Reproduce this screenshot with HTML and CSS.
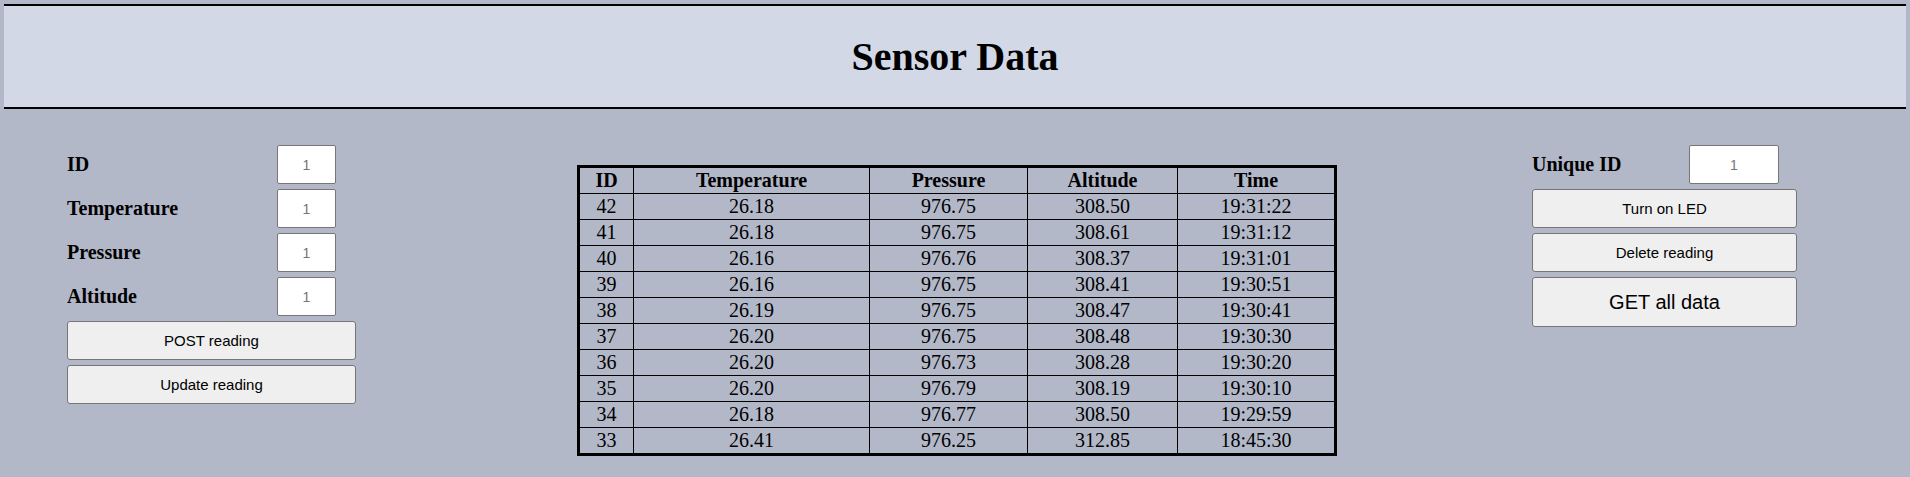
FILE: index.html
```html
<!DOCTYPE html>
<html lang="en">
<head>
	<meta charset="utf-8">
	<title>Sensor Data</title>
	<meta name="viewport" content="width=device-width, initial-scale=1">
	<link rel="stylesheet" href="styles.css">
</head>
<body>
	<div class="header">
		<h1>Sensor Data</h1>
	</div>
	<div class="main">
		<div class="panel panel_left">
			<div class="field">
				<label for="id">ID</label>
				<input type="text" id="id" placeholder="1" />
			</div>
			<div class="field">
				<label for="temperature">Temperature</label>
				<input type="text" id="temperature" placeholder="1" />
			</div>
			<div class="field">
				<label for="pressure">Pressure</label>
				<input type="text" id="pressure" placeholder="1" />
			</div>
			<div class="field">
				<label for="altitude">Altitude</label>
				<input type="text" id="altitude" placeholder="1" />
			</div>
			<button>POST reading</button>
			<button>Update reading</button>
		</div>
		<table class="readings">
			<colgroup>
				<col class="c_id">
				<col class="c_temp">
				<col class="c_pres">
				<col class="c_alt">
				<col class="c_time">
			</colgroup>
			<tr><th>ID</th><th>Temperature</th><th>Pressure</th><th>Altitude</th><th>Time</th></tr>
			<tr><td>42</td><td>26.18</td><td>976.75</td><td>308.50</td><td>19:31:22</td></tr>
			<tr><td>41</td><td>26.18</td><td>976.75</td><td>308.61</td><td>19:31:12</td></tr>
			<tr><td>40</td><td>26.16</td><td>976.76</td><td>308.37</td><td>19:31:01</td></tr>
			<tr><td>39</td><td>26.16</td><td>976.75</td><td>308.41</td><td>19:30:51</td></tr>
			<tr><td>38</td><td>26.19</td><td>976.75</td><td>308.47</td><td>19:30:41</td></tr>
			<tr><td>37</td><td>26.20</td><td>976.75</td><td>308.48</td><td>19:30:30</td></tr>
			<tr><td>36</td><td>26.20</td><td>976.73</td><td>308.28</td><td>19:30:20</td></tr>
			<tr><td>35</td><td>26.20</td><td>976.79</td><td>308.19</td><td>19:30:10</td></tr>
			<tr><td>34</td><td>26.18</td><td>976.77</td><td>308.50</td><td>19:29:59</td></tr>
			<tr><td>33</td><td>26.41</td><td>976.25</td><td>312.85</td><td>18:45:30</td></tr>
		</table>
		<div class="panel panel_right">
			<div class="field">
				<label for="unique_id">Unique ID</label>
				<input type="text" id="unique_id" placeholder="1" />
			</div>
			<button>Turn on LED</button>
			<button>Delete reading</button>
			<button class="big">GET all data</button>
		</div>
	</div>
</body>
</html>
```

FILE: styles.css
```css
body {
	margin: 4px;
	background: #b3b8c8;
	font-family: "Liberation Serif", serif;
	color: #000;
}
.header {
	background: #d2d8e6;
	border-top: 2px solid #000;
	border-bottom: 2px solid #000;
}
.header h1 {
	margin: 0;
	padding: 27px 0;
	font-size: 40px;
	text-align: center;
}
.main {
	display: flex;
	align-items: flex-start;
	padding: 36px 0 0 63px;
}
.panel {
	display: flex;
	flex-direction: column;
	gap: 5px;
}
.panel_left {
	width: 289px;
}
.panel_right {
	width: 265px;
}
.field {
	display: flex;
	align-items: center;
}
.field label {
	font-weight: bold;
	font-size: 20px;
}
.panel_left .field label {
	width: 210px;
}
.panel_right .field label {
	width: 157px;
}
.field input {
	box-sizing: border-box;
	height: 39px;
	width: 59px;
	border: 1px solid #767676;
	border-radius: 2px;
	background: #fff;
	font-family: "Liberation Sans", sans-serif;
	font-size: 14px;
	text-align: center;
}
.panel_right .field input {
	width: 90px;
}
.field input::placeholder {
	color: #757575;
}
button {
	box-sizing: border-box;
	height: 39px;
	width: 100%;
	background: #efefef;
	border: 1px solid #767676;
	border-radius: 3px;
	font-family: "Liberation Sans", sans-serif;
	font-size: 15px;
	color: #000;
}
button.big {
	height: 50px;
	font-size: 20px;
}
.readings {
	margin: 20px 195px 0 221px;
	border-collapse: collapse;
	border: 3px solid #000;
	table-layout: fixed;
	width: 757px;
	font-size: 20px;
}
.readings th, .readings td {
	border: 1px solid #000;
	padding: 1px;
	text-align: center;
}
.c_id { width: 55px; }
.c_temp { width: 236px; }
.c_pres { width: 158px; }
.c_alt { width: 150px; }
.c_time { width: 158px; }
```
